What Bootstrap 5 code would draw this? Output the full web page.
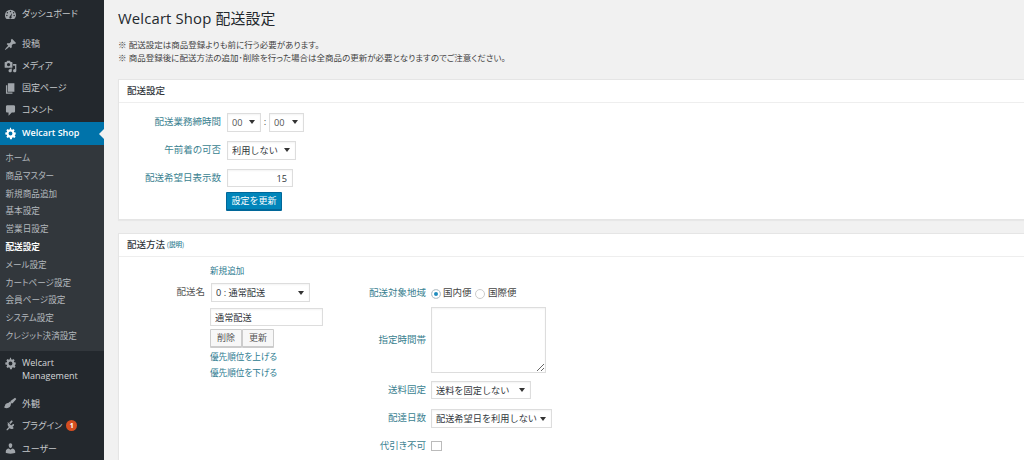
<!DOCTYPE html>
<html lang="ja">
<head>
<meta charset="utf-8">
<title>Welcart Shop 配送設定</title>
<link href="https://cdn.jsdelivr.net/npm/bootstrap@5.3.0/dist/css/bootstrap.min.css" rel="stylesheet">
<style>
html,body{height:460px;overflow:hidden}
body{background:#f1f1f1;color:#444;font-family:"Open Sans","Noto Sans CJK JP",sans-serif;font-size:9.5px;line-height:1.3;font-feature-settings:"palt"}
.wp-shell{height:460px;width:1024px}
.wp-side{width:104px;flex:none;background:#23282d;color:#c8cbce;padding-top:3px}
.side-item{height:22px;font-size:9px;color:#c4c7ca;padding-left:4px;gap:5px}
.side-item svg{width:13px;height:13px;flex:none;fill:#a0a5aa}
.side-gap{margin-top:8px}
.side-active{background:#0073aa;color:#fff;font-weight:600;height:23.5px;margin-top:.5px;position:relative}
.side-active svg{fill:#fff}
.side-active::after{content:"";position:absolute;right:0;top:7px;border:5px solid transparent;border-right-color:#f1f1f1;border-left:0}
.side-sub{background:#32373c;padding:5px 0}
.side-sub div{height:17.8px;line-height:17.8px;padding-left:5.5px;font-size:8.6px;color:#b4b9be}
.side-sub .side-now{color:#fff;font-weight:700}
.side-multi{height:auto;align-items:flex-start!important;padding-top:5px;margin-bottom:11px;line-height:13px;color:#d5d7d9}
.side-multi svg{margin-top:1px}
.side-last{margin-top:1px}
.side-count{width:11px;height:11px;border-radius:50%;background:#d54e21;color:#fff;font-size:7px;font-weight:700;line-height:11px;text-align:center;margin-left:-1px}
.wp-main{padding:0 0 0 14px;flex:1;min-width:0;height:460px;overflow:hidden}
.page-head{font-size:14.85px;font-weight:400;color:#23282d;margin:8px 0 10px;line-height:20px;letter-spacing:.15px}
.page-note{font-size:8.5px;line-height:13px;color:#444}
.panel-box{background:#fff;border:1px solid #e5e5e5;border-right:0;border-radius:0;box-shadow:0 1px 1px rgba(0,0,0,.04)}
.panel-top{height:23px;padding-left:8px;border-bottom:1px solid #eee;font-size:9.5px;font-weight:500;color:#32373c}
.panel-top small{font-size:6.5px;color:#2b7a90;margin-left:2px}
.first-box{margin-top:15px;height:141px}
.second-box{margin-top:13px;height:227px;border-bottom:0}
.lab{color:#3a7f90;text-align:right;white-space:nowrap}
.lab-a{width:102px;margin-right:6px}
.lab-b{width:86px;color:#555;margin-right:6px}
.lab-c{width:71px;margin-right:5px}
.ctl,.ctl:focus{display:block;height:19px;min-height:0;padding:0 14px 0 4px;font-size:9.2px;line-height:17px;color:#32373c;background-color:#fff;border:1px solid #ddd;border-radius:0;box-shadow:inset 0 1px 2px rgba(0,0,0,.05);outline:0;background-position:right 5px center;background-size:6px 4px;background-repeat:no-repeat;background-image:url("data:image/svg+xml,%3Csvg xmlns='http://www.w3.org/2000/svg' viewBox='0 0 6 4'%3E%3Cpath d='M0 0h6L3 4z' fill='%23333'/%3E%3C/svg%3E");appearance:none}
.ctl-time{width:34px;color:#555}
.ctl-time2{width:35px;color:#555}
.time-sep{width:8px;text-align:center;line-height:1}
.ctl-am{width:69px}
.ctl-num{width:66px;height:18px;background-image:none;text-align:right;padding:0 5px}
.ctl-name{width:99px}
.ctl-text{width:113px;height:18px;background-image:none;padding:0 4px;margin-top:3px}
.ctl-fix{width:100px;height:18px}
.ctl-day{width:121px}
.ctl-area,.ctl-area:focus{width:115px;height:66px;resize:both;padding:2px;background-image:none}
.wp-primary,.wp-primary:hover{background:#0085ba;border:1px solid #006799;border-bottom-width:2px;color:#fff;font-size:9px;padding:0;width:56px;height:19px;line-height:16px;border-radius:1px;margin-left:-1px}
.wp-plain,.wp-plain:hover{background:#f7f7f7;border:1px solid #ccc;border-bottom-width:2px;color:#555;font-size:9px;padding:0;width:32px;height:19px;line-height:16px;border-radius:1px}
.teal-link{color:#2b7a90;text-decoration:none;font-size:8.6px}
.rw1{height:28px}
.radio-dot{width:10px;height:10px;border:1px solid #ccc;border-radius:50%;background:#fff;flex:none;margin-right:3px}
.radio-on{box-shadow:inset 0 0 0 2px #fff;background:#1e8cbe;margin-right:2px}
.radio-txt{width:32px}
.tick-box{width:11px;height:10px;border:1px solid #bbb;background:#fff;flex:none}
.first-body{padding-top:5px}
.left-col{width:236px;padding-top:8px}
.new-link{margin-left:91px;height:15px;line-height:12px}
.name-row{height:25px}
.left-stack{margin-left:91px}
.btn-row{margin-top:3px}
.move-link{line-height:16px}
.move-first{margin-top:1px}
.right-col{padding-top:27px}
.row-radio{height:19px}
.row-area{margin-top:4px}
.row-fix{margin-top:8px}
.row-day{margin-top:10px}
.row-tick{margin-top:12px}
</style>
</head>
<body>
<svg width="0" height="0" class="d-block position-absolute">
<symbol id="i-dash" viewBox="0 0 20 20"><path fill-rule="evenodd" d="M10 2.500a8.500 8.500 0 0 0-8.500 8.500c0 2.500 1 4.600 2.700 6h11.600a8.300 8.300 0 0 0 2.700-6A8.500 8.500 0 0 0 10 2.500zm0 1.700a1.100 1.100 0 1 1 0 2.200 1.100 1.100 0 0 1 0-2.200zM5.200 6.300a1.100 1.100 0 1 1 0 2.200 1.100 1.100 0 0 1 0-2.200zm9.600 0a1.100 1.100 0 1 1 0 2.200 1.100 1.100 0 0 1 0-2.200zM3.300 11.500a1.100 1.100 0 1 1 2.200 0 1.100 1.100 0 0 1-2.200 0zm11.200 0a1.100 1.100 0 1 1 2.200 0 1.100 1.100 0 0 1-2.200 0zM8.300 14.200a1.700 1.700 0 0 1 .8-1.500l3.400-5.200-1.200 6a1.700 1.700 0 1 1-3 .7z"/></symbol>
<symbol id="i-pin" viewBox="0 0 20 20"><path d="M10.440 3.020l1.820-1.820 6.360 6.350-1.830 1.820c-1.050-.68-2.480-.57-3.410.36l-.75.75c-.92.930-1.040 2.350-.35 3.410l-1.830 1.820-2.410-2.410-2.800 2.790c-.42.420-3.380 2.710-3.800 2.290s1.860-3.390 2.280-3.810l2.790-2.790L4.100 9.360l1.830-1.820c1.050.69 2.480.57 3.400-.36l.75-.75c.93-.92 1.050-2.350.36-3.410z"/></symbol>
<symbol id="i-media" viewBox="0 0 20 20"><path fill-rule="evenodd" d="M13 11V4c0-.55-.45-1-1-1h-1.670L9 1H5L3.670 3H2c-.55 0-1 .45-1 1v7c0 .55.45 1 1 1h10c.55 0 1-.45 1-1zM7 4.500c1.380 0 2.500 1.120 2.500 2.500S8.380 9.500 7 9.500 4.500 8.380 4.500 7 5.620 4.500 7 4.500zM14 6h5v10.500c0 1.380-1.120 2.500-2.500 2.500S14 17.880 14 16.500s1.120-2.500 2.500-2.500c.17 0 .34.020.5.050V9h-3V6zm-4 8.050V13h2v3.500c0 1.380-1.120 2.500-2.500 2.500S7 17.880 7 16.500 8.120 14 9.500 14c.17 0 .34.020.5.050z"/></symbol>
<symbol id="i-page" viewBox="0 0 20 20"><path d="M6 15V2h10v13H6zm-1 1h8v2H3V5h2v11z"/></symbol>
<symbol id="i-talk" viewBox="0 0 20 20"><path d="M5 2h10c1.100 0 2 .9 2 2v7c0 1.100-.9 2-2 2h-3l-5 5v-5H5c-1.100 0-2-.9-2-2V4c0-1.100.9-2 2-2z"/></symbol>
<symbol id="i-gear" viewBox="0 0 20 20"><path fill-rule="evenodd" d="M18 11.400v-2.800l-2.300-.4-.6-1.400 1.300-1.900-2-2-1.900 1.300-1.400-.6L10.700 1H9.300l-.4 2.600-1.400.6-1.900-1.300-2 2 1.300 1.900-.6 1.400L2 8.600v2.800l2.300.4.6 1.400-1.300 1.900 2 2 1.900-1.300 1.400.6.4 2.600h2.800l.4-2.600 1.400-.6 1.900 1.300 2-2-1.300-1.900.6-1.400zM10 13a3 3 0 1 1 0-6 3 3 0 0 1 0 6z"/></symbol>
<symbol id="i-brush" viewBox="0 0 20 20"><path d="M19 3l-2-2-7.500 5.500 3.500 3.500zM8.700 7.200L6.500 9.200c-2.500-.2-4.300 1.300-4.800 3.500-.3 1.300-.7 2.300-1.700 3 2.500 2 6.500 2 8.800-.3 1.300-1.300 2-2.800 1.700-4.500l1.800-1.900z"/></symbol>
<symbol id="i-plug" viewBox="0 0 20 20"><path d="M13.110 4.360L9.870 7.600 8 5.730l3.240-3.240c.35-.34 1.050-.2 1.560.32.52.51.66 1.210.31 1.550zm-8 1.770l.91-1.120 9.010 9.010-1.190.84c-1.300.91-3.800.83-4.720-.08L9 13.660l-3.500 3.500H4v-1.500l3.500-3.500-1.100-1.100c-.9-.92-.99-3.410-.29-4.430zm10.260 3.680l-3.240 3.240-1.870-1.870 3.240-3.240c.35-.34 1.050-.2 1.560.32.52.51.66 1.210.31 1.550z"/></symbol>
<symbol id="i-user" viewBox="0 0 20 20"><path d="M10 9.250c-2.270 0-2.730-3.440-2.730-3.440C7 4.020 7.820 2 9.970 2c2.160 0 2.980 2.020 2.710 3.810 0 0-.41 3.440-2.680 3.440zm0 2.570L12.720 10c2.390 0 4.520 2.330 4.520 4.530v2.490s-3.650 1.130-7.240 1.130c-3.650 0-7.240-1.130-7.240-1.130v-2.490c0-2.250 1.940-4.480 4.470-4.480z"/></symbol>
</svg>
<div class="wp-shell d-flex">
  <nav class="wp-side d-flex flex-column">
    <div class="side-item d-flex align-items-center"><svg><use href="#i-dash"/></svg>ダッシュボード</div>
    <div class="side-item side-gap d-flex align-items-center"><svg><use href="#i-pin"/></svg>投稿</div>
    <div class="side-item d-flex align-items-center"><svg><use href="#i-media"/></svg>メディア</div>
    <div class="side-item d-flex align-items-center"><svg><use href="#i-page"/></svg>固定ページ</div>
    <div class="side-item d-flex align-items-center"><svg><use href="#i-talk"/></svg>コメント</div>
    <div class="side-item side-active d-flex align-items-center"><svg><use href="#i-gear"/></svg>Welcart Shop</div>
    <div class="side-sub">
      <div>ホーム</div><div>商品マスター</div><div>新規商品追加</div><div>基本設定</div><div>営業日設定</div><div class="side-now">配送設定</div><div>メール設定</div><div>カートページ設定</div><div>会員ページ設定</div><div>システム設定</div><div>クレジット決済設定</div>
    </div>
    <div class="side-item side-multi d-flex"><svg><use href="#i-gear"/></svg><span>Welcart<br>Management</span></div>
    <div class="side-item d-flex align-items-center"><svg><use href="#i-brush"/></svg>外観</div>
    <div class="side-item d-flex align-items-center"><svg><use href="#i-plug"/></svg>プラグイン<span class="side-count">1</span></div>
    <div class="side-item side-last d-flex align-items-center"><svg><use href="#i-user"/></svg>ユーザー</div>
  </nav>
  <main class="wp-main">
    <h1 class="page-head">Welcart Shop 配送設定</h1>
    <div class="page-note">※ 配送設定は商品登録よりも前に行う必要があります。<br>※ 商品登録後に配送方法の追加･削除を行った場合は全商品の更新が必要となりますのでご注意ください。</div>

    <section class="panel-box first-box">
      <div class="panel-top d-flex align-items-center">配送設定</div>
      <div class="first-body">
        <div class="rw1 d-flex align-items-center">
          <span class="lab lab-a">配送業務締時間</span>
          <select class="ctl ctl-time"><option>00</option></select>
          <span class="time-sep">:</span>
          <select class="ctl ctl-time2"><option>00</option></select>
        </div>
        <div class="rw1 d-flex align-items-center">
          <span class="lab lab-a">午前着の可否</span>
          <select class="ctl ctl-am"><option>利用しない</option></select>
        </div>
        <div class="rw1 d-flex align-items-center">
          <span class="lab lab-a">配送希望日表示数</span>
          <input class="ctl ctl-num" value="15">
        </div>
        <div class="d-flex">
          <span class="lab-a"></span>
          <button type="button" class="btn wp-primary">設定を更新</button>
        </div>
      </div>
    </section>

    <section class="panel-box second-box">
      <div class="panel-top d-flex align-items-center">配送方法<small>(説明)</small></div>
      <div class="d-flex">
        <div class="left-col d-flex flex-column">
          <a class="teal-link new-link" href="#">新規追加</a>
          <div class="name-row d-flex align-items-center">
            <span class="lab lab-b">配送名</span>
            <select class="ctl ctl-name"><option>0 : 通常配送</option></select>
          </div>
          <div class="left-stack">
            <input class="ctl ctl-text" value="通常配送">
            <div class="btn-row d-flex">
              <button type="button" class="btn wp-plain">削除</button>
              <button type="button" class="btn wp-plain">更新</button>
            </div>
            <a class="teal-link move-link move-first d-block" href="#">優先順位を上げる</a>
            <a class="teal-link move-link d-block" href="#">優先順位を下げる</a>
          </div>
        </div>
        <div class="right-col d-flex flex-column">
          <div class="row-radio d-flex align-items-center">
            <span class="lab lab-c">配送対象地域</span>
            <span class="radio-dot radio-on"></span><span class="radio-txt">国内便</span>
            <span class="radio-dot"></span><span>国際便</span>
          </div>
          <div class="row-area d-flex align-items-center">
            <span class="lab lab-c">指定時間帯</span>
            <textarea class="ctl ctl-area"></textarea>
          </div>
          <div class="row-fix d-flex align-items-center">
            <span class="lab lab-c">送料固定</span>
            <select class="ctl ctl-fix"><option>送料を固定しない</option></select>
          </div>
          <div class="row-day d-flex align-items-center">
            <span class="lab lab-c">配達日数</span>
            <select class="ctl ctl-day"><option>配送希望日を利用しない</option></select>
          </div>
          <div class="row-tick d-flex align-items-center">
            <span class="lab lab-c">代引き不可</span>
            <span class="tick-box"></span>
          </div>
        </div>
      </div>
    </section>
  </main>
</div>
</body>
</html>
